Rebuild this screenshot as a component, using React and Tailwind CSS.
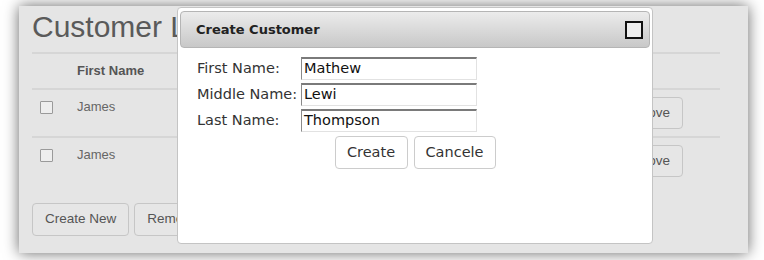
import React from "react";

const sans = { fontFamily: '"Liberation Sans", Arial, sans-serif' };

function Checkbox() {
  return <span className="inline-block w-[13px] h-[13px] border border-[#9a9a9a] bg-[#eeeeee] rounded-[1px]" />;
}

function Row({ first }) {
  return (
    <div className="flex items-start border-t-2 border-[#d6d6d6] pt-[7px] pb-[7px]">
      <div className="w-[45px] pl-[8px] h-[20px] flex items-center">
        <Checkbox />
      </div>
      <div className="w-[95px] leading-[20px] text-[13px] text-[#666]">{first}</div>
      <div className="flex-1" />
      <div className="pr-[37px]">
        <button className="h-[32px] px-[12px] border border-[#c6c6c6] rounded-[4px] bg-[#e6e6e6] text-[13.5px] text-[#555]">
          Remove
        </button>
      </div>
    </div>
  );
}

function Field({ label, value }) {
  return (
    <div className="flex items-center h-[23px]">
      <div className="w-[104px] text-[14.5px] text-[#333] whitespace-nowrap">{label}</div>
      <div className="w-[176px] h-[23px] bg-white border-t-2 border-l border-r border-b border-t-[#7a7a7a] border-l-[#8a8a8a] border-r-[#e2e2e2] border-b-[#e2e2e2] pl-[2px] flex items-center text-[14.5px] text-[#111]">
        {value}
      </div>
    </div>
  );
}

export default function App() {
  return (
    <div className="relative w-[764px] h-[260px] bg-white overflow-hidden pl-[19px] pt-[6px]">
      <div
        className="w-[729px] h-[247px] bg-[#e5e5e5] shadow-[0_0_14px_rgba(0,0,0,0.6)] pt-[4px] pl-[13px] pr-[28px]"
        style={sans}
      >
        <h1 className="text-[30px] leading-[33px] text-[#5a5a5a] font-normal mb-[9px]">Customer List</h1>
        <div>
          <div className="flex items-start border-t-2 border-[#d6d6d6] pt-[7px] pb-[7px]">
            <div className="w-[45px]" />
            <div className="leading-[20px] text-[13px] font-bold text-[#555]">First Name</div>
          </div>
          <Row first="James" />
          <Row first="James" />
        </div>
        <div className="flex gap-[5px] mt-[19px]">
          <button className="h-[33px] px-[12px] border border-[#c6c6c6] rounded-[4px] bg-[#e6e6e6] text-[13.5px] text-[#555]">
            Create New
          </button>
          <button className="h-[33px] px-[12px] border border-[#c6c6c6] rounded-[4px] bg-[#e6e6e6] text-[13.5px] text-[#555]">
            Remove
          </button>
        </div>
      </div>

      <div
        className="absolute left-[177px] top-[7px] w-[476px] h-[237px] bg-white border border-[#c4c4c4] rounded-[4px] p-[2px]"
        style={{ fontFamily: '"DejaVu Sans", Verdana, sans-serif' }}
      >
        <div className="h-[37px] mt-[1px] rounded-[4px] border border-[#b5b5b5] bg-gradient-to-b from-[#ececec] to-[#c8c8c8] flex items-center justify-between pl-[15px] pr-[6px]">
          <span className="text-[13px] font-bold text-[#222]">Create Customer</span>
          <span className="w-[18px] h-[18px] border-2 border-[#111] bg-[#eeeeee]" />
        </div>
        <div className="pl-[17px] pt-[9px] flex flex-col gap-[3px]">
          <Field label="First Name:" value="Mathew" />
          <Field label="Middle Name:" value="Lewi" />
          <Field label="Last Name:" value="Thompson" />
        </div>
        <div className="flex justify-center gap-[6px] mt-[4px]">
          <button className="h-[33px] w-[73px] border border-[#cccccc] rounded-[4px] bg-white text-[14.5px] text-[#333]">
            Create
          </button>
          <button className="h-[33px] w-[82px] border border-[#cccccc] rounded-[4px] bg-white text-[14.5px] text-[#333]">
            Cancele
          </button>
        </div>
      </div>
    </div>
  );
}
